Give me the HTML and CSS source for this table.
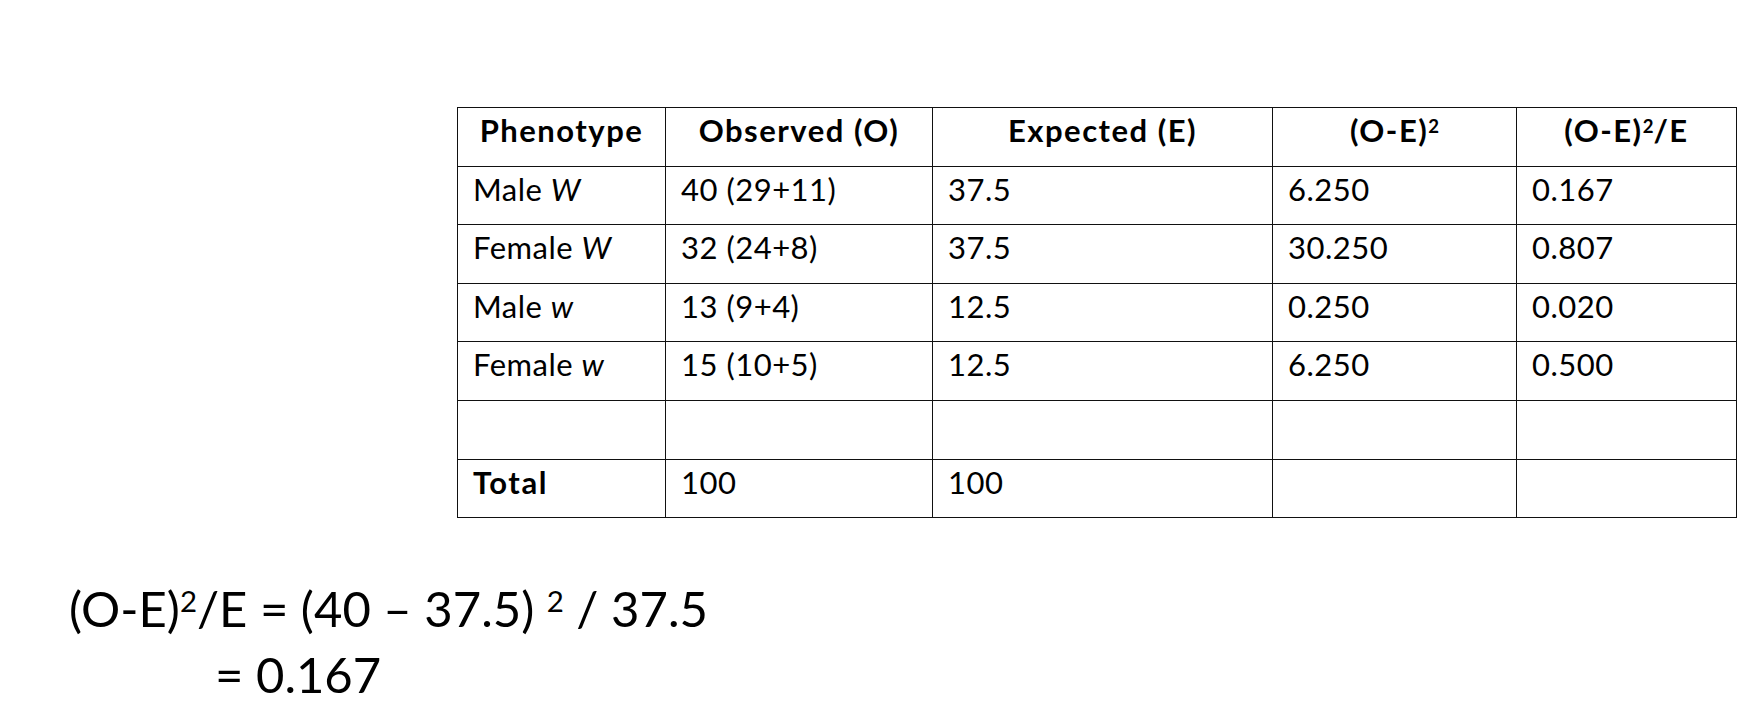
FILE: index.html
```html
<!DOCTYPE html>
<html lang="en">
<head>
  <meta charset="UTF-8">
  <meta name="viewport" content="width=device-width, initial-scale=1.0">
  <title>Chi-square worked example</title>
  <link rel="stylesheet" href="styles.css">
</head>
<body>
  <div class="slide">
    <table class="chi-table">
      <colgroup>
        <col class="col-pheno">
        <col class="col-obs">
        <col class="col-exp">
        <col class="col-sq">
        <col class="col-ratio">
      </colgroup>
      <thead>
        <tr>
          <th>Phenotype</th>
          <th>Observed (O)</th>
          <th>Expected (E)</th>
          <th>(O-E)<sup class="sq">2</sup></th>
          <th>(O-E)<sup class="sq">2</sup>/E</th>
        </tr>
      </thead>
      <tbody>
        <tr>
          <td>Male <i>W</i></td>
          <td>40 (29+11)</td>
          <td>37.5</td>
          <td>6.250</td>
          <td>0.167</td>
        </tr>
        <tr>
          <td>Female <i>W</i></td>
          <td>32 (24+8)</td>
          <td>37.5</td>
          <td>30.250</td>
          <td>0.807</td>
        </tr>
        <tr>
          <td>Male <i>w</i></td>
          <td>13 (9+4)</td>
          <td>12.5</td>
          <td>0.250</td>
          <td>0.020</td>
        </tr>
        <tr>
          <td>Female <i>w</i></td>
          <td>15 (10+5)</td>
          <td>12.5</td>
          <td>6.250</td>
          <td>0.500</td>
        </tr>
        <tr>
          <td></td>
          <td></td>
          <td></td>
          <td></td>
          <td></td>
        </tr>
        <tr>
          <td class="total">Total</td>
          <td>100</td>
          <td>100</td>
          <td></td>
          <td></td>
        </tr>
      </tbody>
    </table>

    <div class="formula">
      <p>(O-E)<sup class="sq">2</sup>/E = (40 – 37.5) <sup class="sq">2</sup> / 37.5</p>
      <p class="result">= 0.167</p>
    </div>
  </div>
</body>
</html>
```

FILE: styles.css
```css
body {
  margin: 0;
  padding: 0;
  background-color: #fff;
  color: #000;
  font-family: Lato, "Liberation Sans", sans-serif;
}

.slide {
  width: 1752px;
  height: 708px;
  overflow: hidden;
}

.chi-table {
  border-collapse: collapse;
  table-layout: fixed;
  width: 1279px;
  margin: 107px 0 0 457px;
  font-size: 31px;
  line-height: 36px;
  letter-spacing: 0.5px;
}

.col-pheno { width: 208px; }
.col-obs { width: 267px; }
.col-exp { width: 340px; }
.col-sq { width: 244px; }
.col-ratio { width: 220px; }

.chi-table th,
.chi-table td {
  border: 1.5px solid #111;
  height: 58.6px;
  box-sizing: border-box;
  padding: 4px 15px 0;
  vertical-align: top;
  text-align: left;
  white-space: nowrap;
}

.chi-table th {
  text-align: center;
  font-weight: bold;
  letter-spacing: 1.5px;
}

.chi-table td.total {
  font-weight: bold;
  letter-spacing: 1.5px;
}

.sq {
  font-size: 0.6em;
  line-height: 0;
  vertical-align: 0.5em;
  letter-spacing: 0;
}

.formula {
  margin: 57px 0 0 69px;
  font-size: 49px;
  line-height: 66px;
}

.formula p {
  margin: 0;
}

.formula .result {
  padding-left: 146px;
}
```
